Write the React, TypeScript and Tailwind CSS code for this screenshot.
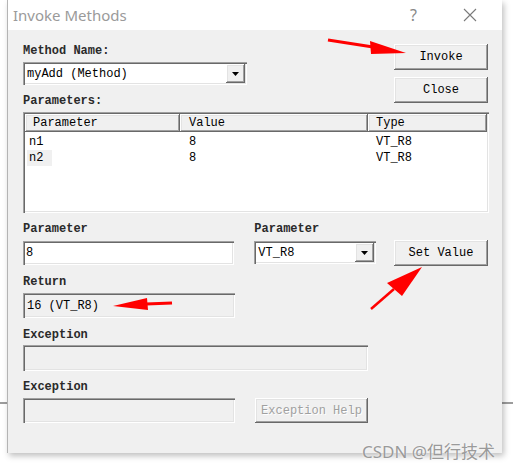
import React from "react";

const sunken =
  "shadow-[inset_1px_1px_#a0a0a0,inset_2px_2px_#696969,inset_-1px_-1px_#ffffff,inset_-2px_-2px_#e3e3e3]";
const raised =
  "shadow-[inset_-1px_-1px_#696969,inset_1px_1px_#ffffff,inset_-2px_-2px_#a0a0a0,inset_2px_2px_#e3e3e3]";

const mono = "font-['Liberation_Mono','DejaVu_Sans_Mono',monospace] text-[12px]";

function Label({ children, className = "" }: { children: React.ReactNode; className?: string }) {
  return <div className={`h-[14px] leading-[14px] font-bold text-[#2a2a2a] ${className}`}>{children}</div>;
}

function Button({ children, className = "", disabled = false }: { children: React.ReactNode; className?: string; disabled?: boolean }) {
  return (
    <div
      className={`flex items-center justify-center bg-[#f0f0f0] ${raised} ${
        disabled ? "text-[#a0a0a0] [text-shadow:1px_1px_#ffffff]" : "text-black"
      } ${className}`}
    >
      {children}
    </div>
  );
}

function Arrow() {
  return (
    <svg width="7" height="4" viewBox="0 0 7 4">
      <polygon points="0,0 7,0 3.5,4" fill="#000" />
    </svg>
  );
}

function Combo({ value, className = "" }: { value: string; className?: string }) {
  return (
    <div className={`flex items-center bg-white pl-[4px] pr-[2px] ${sunken} ${className}`}>
      <span className="text-black">{value}</span>
      <div className={`ml-auto flex h-[19px] w-[19px] items-center justify-center bg-[#f0f0f0] ${raised}`}>
        <Arrow />
      </div>
    </div>
  );
}

const params = [
  { name: "n1", value: "8", type: "VT_R8" },
  { name: "n2", value: "8", type: "VT_R8" },
];

export default function App() {
  return (
    <div className={`relative h-[470px] w-[513px] overflow-hidden bg-white ${mono}`}>
      {/* page behind the dialog */}
      <div className="absolute left-0 top-[402px] h-[2px] w-full bg-[#9c9c9c]" />

      <div className="relative ml-[7px] flex h-[453px] w-[495px] flex-col border-l border-[#b4b4b4] shadow-[2px_3px_6px_rgba(0,0,0,0.25)]">
        {/* title bar */}
        <div className="flex h-[30px] items-center bg-white pl-[5px] font-['Noto_Sans',sans-serif] text-[15px] text-[#9a9a9a]">
          <span>Invoke Methods</span>
          <span className="ml-auto mr-[46px] text-[16px] text-[#888]">?</span>
          <svg width="14" height="14" viewBox="0 0 14 14" className="mr-[25px]">
            <path d="M1 1 L13 13 M13 1 L1 13" stroke="#7a7a7a" strokeWidth="1.1" fill="none" />
          </svg>
        </div>

        {/* body */}
        <div className="flex-1 bg-[#f0f0f0] pl-[15px] pr-[14px] pt-[14px]">
          <div className="flex justify-between">
            <div className="w-[224px]">
              <Label>Method Name:</Label>
              <Combo value="myAdd (Method)" className="mt-[4px] h-[23px] w-[224px]" />
              <Label className="mt-[9px]">Parameters:</Label>
            </div>
            <div className="flex w-[94px] flex-col gap-[7px]">
              <Button className="h-[26px]">Invoke</Button>
              <Button className="h-[26px]">Close</Button>
            </div>
          </div>

          {/* list view */}
          <div className={`mt-[4px] h-[101px] w-[466px] bg-white p-[2px] ${sunken}`}>
            <div className="flex h-[18px] leading-[18px] text-black">
              <div className={`w-[155px] bg-[#f0f0f0] pl-[8px] ${raised}`}>Parameter</div>
              <div className={`w-[188px] bg-[#f0f0f0] pl-[9px] ${raised}`}>Value</div>
              <div className={`flex-1 bg-[#f0f0f0] pl-[8px] ${raised}`}>Type</div>
            </div>
            <div className="pt-[2px]">
              {params.map((p, i) => (
                <div key={p.name} className="flex h-[16px] leading-[16px] text-black">
                  <div className="w-[155px] pl-[2px]">
                    <span className={`px-[2px] ${i === 1 ? "bg-[#f0f0f0]" : ""} inline-block w-[25px]`}>{p.name}</span>
                  </div>
                  <div className="w-[188px] pl-[9px]">{p.value}</div>
                  <div className="flex-1 pl-[8px]">{p.type}</div>
                </div>
              ))}
            </div>
          </div>

          {/* parameter row */}
          <div className="mt-[9px] flex">
            <div className="w-[212px]">
              <Label>Parameter</Label>
              <div className={`mt-[5px] flex h-[24px] items-center bg-white pl-[3px] text-black ${sunken}`}>8</div>
            </div>
            <div className="ml-[20px] w-[122px]">
              <Label>Parameter</Label>
              <Combo value="VT_R8" className="mt-[5px] h-[23px]" />
            </div>
            <div className="ml-[18px] pt-[18px]">
              <Button className="h-[26px] w-[94px]">Set Value</Button>
            </div>
          </div>

          <Label className="mt-[9px]">Return</Label>
          <div className={`mt-[4px] flex h-[25px] w-[212px] items-center pl-[4px] text-black ${sunken}`}>16 (VT_R8)</div>

          <Label className="mt-[10px]">Exception</Label>
          <div className={`mt-[3px] h-[26px] w-[345px] ${sunken}`} />

          <Label className="mt-[9px]">Exception</Label>
          <div className="mt-[4px] flex">
            <div className={`h-[25px] w-[212px] ${sunken}`} />
            <Button disabled className="ml-[20px] h-[25px] w-[113px]">Exception Help</Button>
          </div>
        </div>
      </div>

      {/* annotations */}
      <svg className="pointer-events-none absolute left-0 top-0" width="513" height="470" viewBox="0 0 513 470">
        <line x1="328" y1="40" x2="373" y2="47" stroke="#ff0000" strokeWidth="3" />
        <polygon points="370,41 406,53 371,54" fill="#ff0000" />
        <line x1="172" y1="303" x2="146" y2="304" stroke="#ff0000" strokeWidth="3" />
        <polygon points="147,298 113,306 148,310" fill="#ff0000" />
        <line x1="371" y1="309" x2="394" y2="289" stroke="#ff0000" strokeWidth="2.5" />
        <polygon points="387,283 422,267 402,296" fill="#ff0000" />
      </svg>

      <div className="absolute left-[362px] top-[440px] font-['Noto_Sans','Noto_Sans_CJK_SC',sans-serif] text-[17px] leading-[24px] text-[#9a9a9a] [text-shadow:0_0_2px_#ffffff]">
        CSDN @但行技术
      </div>
    </div>
  );
}
